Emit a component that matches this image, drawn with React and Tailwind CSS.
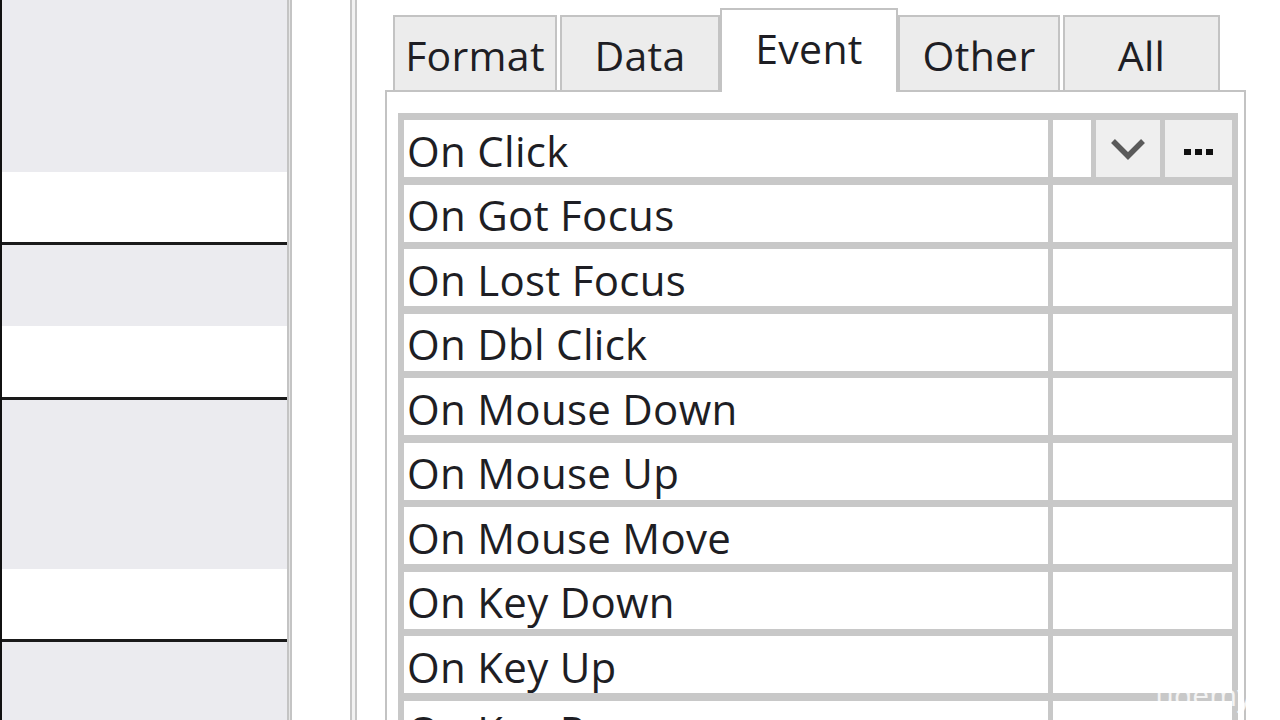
import { Fragment } from 'react'

const events = [
  'On Click',
  'On Got Focus',
  'On Lost Focus',
  'On Dbl Click',
  'On Mouse Down',
  'On Mouse Up',
  'On Mouse Move',
  'On Key Down',
  'On Key Up',
  'On Key Press',
]

const sideBands = [
  { h: 'h-[172px]', tone: 'gray' },
  { h: 'h-[70px]', tone: 'white' },
  { h: 'h-[3px]', tone: 'line' },
  { h: 'h-[81px]', tone: 'gray' },
  { h: 'h-[71px]', tone: 'white' },
  { h: 'h-[3px]', tone: 'line' },
  { h: 'h-[169px]', tone: 'gray' },
  { h: 'h-[70px]', tone: 'white' },
  { h: 'h-[3px]', tone: 'line' },
  { h: 'h-[100px]', tone: 'gray' },
]

const toneClass = {
  gray: 'bg-[#ebebef]',
  white: 'bg-white',
  line: 'bg-[#1a1a1a]',
}

function Tab({ label, className, selected }) {
  if (selected) {
    return (
      <div
        className={`relative z-10 -mb-[2px] flex h-[84px] items-center justify-center border-2 border-b-0 border-[#c3c3c3] bg-white pb-[6px] ${className}`}
      >
        {label}
      </div>
    )
  }
  return (
    <div
      className={`flex h-[75px] items-center justify-center border-2 border-b-0 border-[#c3c3c3] bg-[#ececec] pt-[4px] ${className}`}
    >
      {label}
    </div>
  )
}

function BuildButtons() {
  return (
    <div className="flex h-full gap-[5px] bg-[#c8c8c8]">
      <div className="w-[38px] bg-white" />
      <div className="flex w-[64px] items-center justify-center bg-[#efefef]">
        <svg width="34" height="24" viewBox="0 0 34 24">
          <polyline
            points="2,4 17,19 32,4"
            fill="none"
            stroke="#5a5a5a"
            strokeWidth="5.5"
          />
        </svg>
      </div>
      <div className="flex flex-1 items-center justify-center gap-[4px] bg-[#efefef] pt-[6px]">
        <span className="h-[6px] w-[7px] bg-[#111]" />
        <span className="h-[6px] w-[7px] bg-[#111]" />
        <span className="h-[6px] w-[7px] bg-[#111]" />
      </div>
    </div>
  )
}

export default function App() {
  return (
    <div className="relative flex h-[720px] w-[1280px] overflow-hidden bg-white font-['Open_Sans',_'Noto_Sans',_sans-serif] text-[#1e1e24]">
      {/* field list behind the property sheet */}
      <div className="flex w-[287px] flex-col border-l-2 border-[#111]">
        {sideBands.map((b, i) => (
          <div key={i} className={`${b.h} ${toneClass[b.tone]} shrink-0`} />
        ))}
      </div>
      <div className="w-[5px] border-x-2 border-[#c4c4c4] bg-[#e6e6e6]" />
      <div className="w-[58px]" />
      <div className="w-[7px] border-x-2 border-[#c6c6c6] bg-[#f2f2f2]" />

      {/* property sheet */}
      <div className="flex min-h-0 flex-1 flex-col pl-[28px]">
        <div className="flex h-[90px] shrink-0 items-end pl-[8px] text-[41px] leading-none tracking-[0.3px]">
          <Tab label="Format" className="w-[164px]" />
          <Tab label="Data" className="ml-[3px] w-[160px]" />
          <Tab label="Event" className="w-[178px]" selected />
          <Tab label="Other" className="w-[162px]" />
          <Tab label="All" className="ml-[3px] w-[157px]" />
        </div>

        <div className="w-[861px] flex-1 border-2 border-b-0 border-[#c3c3c3] pl-[11px] pt-[21px]">
          <div className="flex w-[840px] flex-col gap-[7.5px] border-[6px] border-t-[7px] border-[#c8c8c8] bg-[#c8c8c8]">
            {events.map((name, i) => (
              <div key={name} className="flex h-[57px] shrink-0 gap-[5px]">
                <div className="flex flex-1 items-center bg-white pl-[3px] pt-[4px] text-[42px] leading-none tracking-[0.3px] whitespace-nowrap">
                  {name}
                </div>
                <div className="w-[179px] bg-white">
                  {i === 0 ? <BuildButtons /> : null}
                </div>
              </div>
            ))}
          </div>
        </div>
      </div>

      <span className="absolute right-[28px] bottom-[10px] font-['Open_Sans',_sans-serif] text-[30px] leading-none text-white/80">
        udemy
      </span>
    </div>
  )
}
